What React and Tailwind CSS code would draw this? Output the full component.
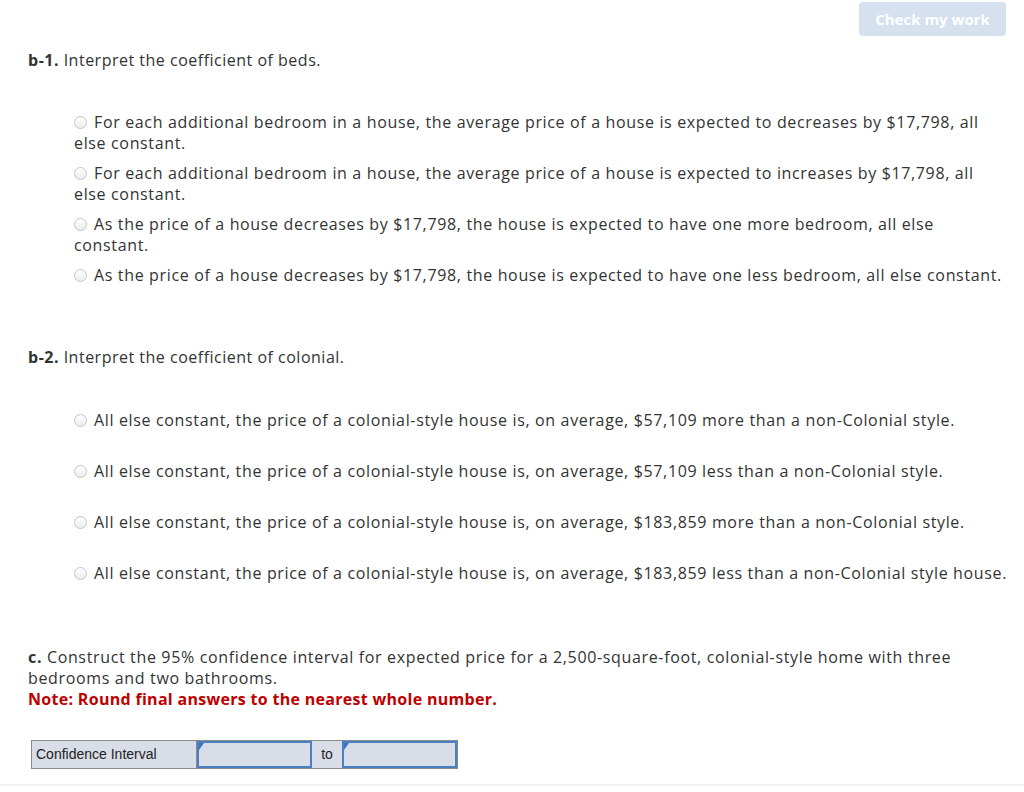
import React from 'react';

const b1Options = [
  'For each additional bedroom in a house, the average price of a house is expected to decreases by $17,798, all else constant.',
  'For each additional bedroom in a house, the average price of a house is expected to increases by $17,798, all else constant.',
  'As the price of a house decreases by $17,798, the house is expected to have one more bedroom, all else constant.',
  'As the price of a house decreases by $17,798, the house is expected to have one less bedroom, all else constant.',
];

const b2Options = [
  'All else constant, the price of a colonial-style house is, on average, $57,109 more than a non-Colonial style.',
  'All else constant, the price of a colonial-style house is, on average, $57,109 less than a non-Colonial style.',
  'All else constant, the price of a colonial-style house is, on average, $183,859 more than a non-Colonial style.',
  'All else constant, the price of a colonial-style house is, on average, $183,859 less than a non-Colonial style house.',
];

const Radio = () => (
  <span className="inline-block w-[13px] h-[13px] rounded-full border border-[#c4c4c4] bg-gradient-to-b from-white to-[#ececec] align-[-1px] mr-[7px]"></span>
);

const OptionList = ({ options }) => (
  <div className="ml-[74px] w-[934px]">
    {options.map((text, i) => (
      <div key={i} className="h-[51px]">
        <Radio />
        {text}
      </div>
    ))}
  </div>
);

export default function App() {
  return (
    <div className="w-[1024px] h-[792px] bg-white text-[#333] text-[16px] leading-[21px] tracking-[0.65px] font-['Open_Sans',sans-serif] overflow-hidden">
      <div className="flex justify-end pt-[2px] pr-[18px]">
        <button className="w-[147px] h-[34px] rounded-[4px] bg-[#d5e1ef] text-white font-bold text-[15px] leading-[32px] tracking-normal">
          Check my work
        </button>
      </div>

      <p className="ml-[28px] mt-[14px] tracking-[0.5px]">
        <span className="font-bold">b-1.</span> Interpret the coefficient of beds.
      </p>
      <div className="mt-[41px]">
        <OptionList options={b1Options} />
      </div>

      <p className="ml-[28px] mt-[31px] tracking-[0.5px]">
        <span className="font-bold">b-2.</span> Interpret the coefficient of colonial.
      </p>
      <div className="mt-[42px]">
        <OptionList options={b2Options} />
      </div>

      <div className="ml-[28px] mt-[33px] w-[940px]">
        <p>
          <span className="font-bold">c.</span> Construct the 95% confidence interval for expected price for a 2,500-square-foot, colonial-style home with three bedrooms and two bathrooms.
        </p>
        <p className="font-bold text-[#c00000] tracking-[0.3px]">Note: Round final answers to the nearest whole number.</p>
      </div>

      <div className="ml-[31px] mt-[30px] flex h-[29px] w-[427px] border border-[#8a8a8a] bg-[#d9dde8] font-['Liberation_Sans',Arial,sans-serif] text-[14px] tracking-normal text-[#222]">
        <div className="w-[165px] flex items-center pl-[4px] border-r border-[#8a8a8a]">Confidence Interval</div>
        <div className="relative w-[115px] border-2 border-[#4a7fc1]">
          <span className="absolute left-0 top-0 w-0 h-0 border-t-[7px] border-r-[5px] border-t-[#3b74c4] border-r-transparent"></span>
        </div>
        <div className="w-[30px] flex items-center justify-center">to</div>
        <div className="relative flex-1 border-2 border-[#4a7fc1]">
          <span className="absolute left-0 top-0 w-0 h-0 border-t-[7px] border-r-[5px] border-t-[#3b74c4] border-r-transparent"></span>
        </div>
      </div>

      <div className="mt-[15px] h-[2px] bg-[#f3f3f3]"></div>
    </div>
  );
}
